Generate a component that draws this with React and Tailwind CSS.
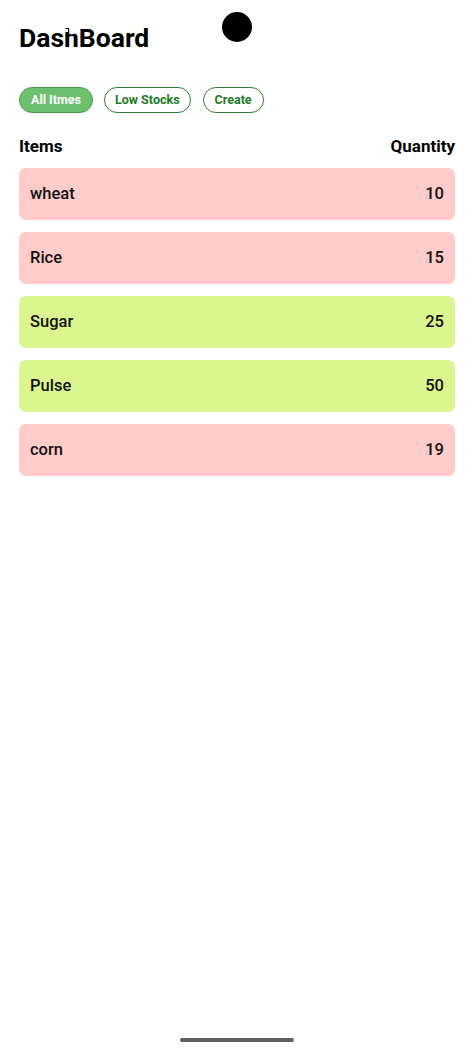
import React from 'react';

const items = [
  { name: 'wheat', qty: 10, low: true },
  { name: 'Rice', qty: 15, low: true },
  { name: 'Sugar', qty: 25, low: false },
  { name: 'Pulse', qty: 50, low: false },
  { name: 'corn', qty: 19, low: true },
];

export default function App() {
  return (
    <div className="relative w-[474px] h-[1054px] bg-white overflow-hidden" style={{ fontFamily: 'Roboto, "Noto Sans", sans-serif' }}>
      <div className="px-[19px] pt-[21px]">
        <h1 className="text-[26.5px] leading-[34px] font-bold text-black">DashBoard</h1>

        <div className="flex gap-[11px] mt-[32px]">
          <button className="h-[26px] px-[11px] rounded-full bg-[#6cc070] border border-[#43a047] text-white text-[12.5px] font-bold">All Itmes</button>
          <button className="h-[26px] px-[10px] rounded-full bg-white border border-[#2e7d32] text-[#1b7a1f] text-[12.5px] font-bold">Low Stocks</button>
          <button className="h-[26px] ml-[1px] px-[11px] rounded-full bg-white border border-[#2e7d32] text-[#1b7a1f] text-[12.5px] font-bold">Create</button>
        </div>

        <div className="flex justify-between mt-[21px] text-[17px] font-bold text-black leading-[24px]">
          <span>Items</span>
          <span>Quantity</span>
        </div>

        <div className="flex flex-col gap-[12px] mt-[10px]">
          {items.map((it) => (
            <div
              key={it.name}
              className={`h-[52px] rounded-[7px] flex items-center justify-between px-[11px] text-[16.5px] font-medium text-[#111] ${it.low ? 'bg-[#ffcccb]' : 'bg-[#dbf68f]'}`}
            >
              <span>{it.name}</span>
              <span>{it.qty}</span>
            </div>
          ))}
        </div>
      </div>

      {/* clipped bits of the title under the status bar */}
      <div className="absolute left-[63px] top-[29px] w-[5px] h-[3px] bg-white" />
      <div className="absolute left-[70px] top-[26px] w-[5px] h-[8px] bg-white -rotate-12" />

      {/* camera punch hole */}
      <div className="absolute left-[222px] top-[12px] w-[30px] h-[30px] rounded-full bg-black" />

      {/* gesture bar */}
      <div className="absolute left-[180px] top-[1038px] w-[114px] h-[4px] rounded-full bg-[#5f5f5f]" />
    </div>
  );
}
